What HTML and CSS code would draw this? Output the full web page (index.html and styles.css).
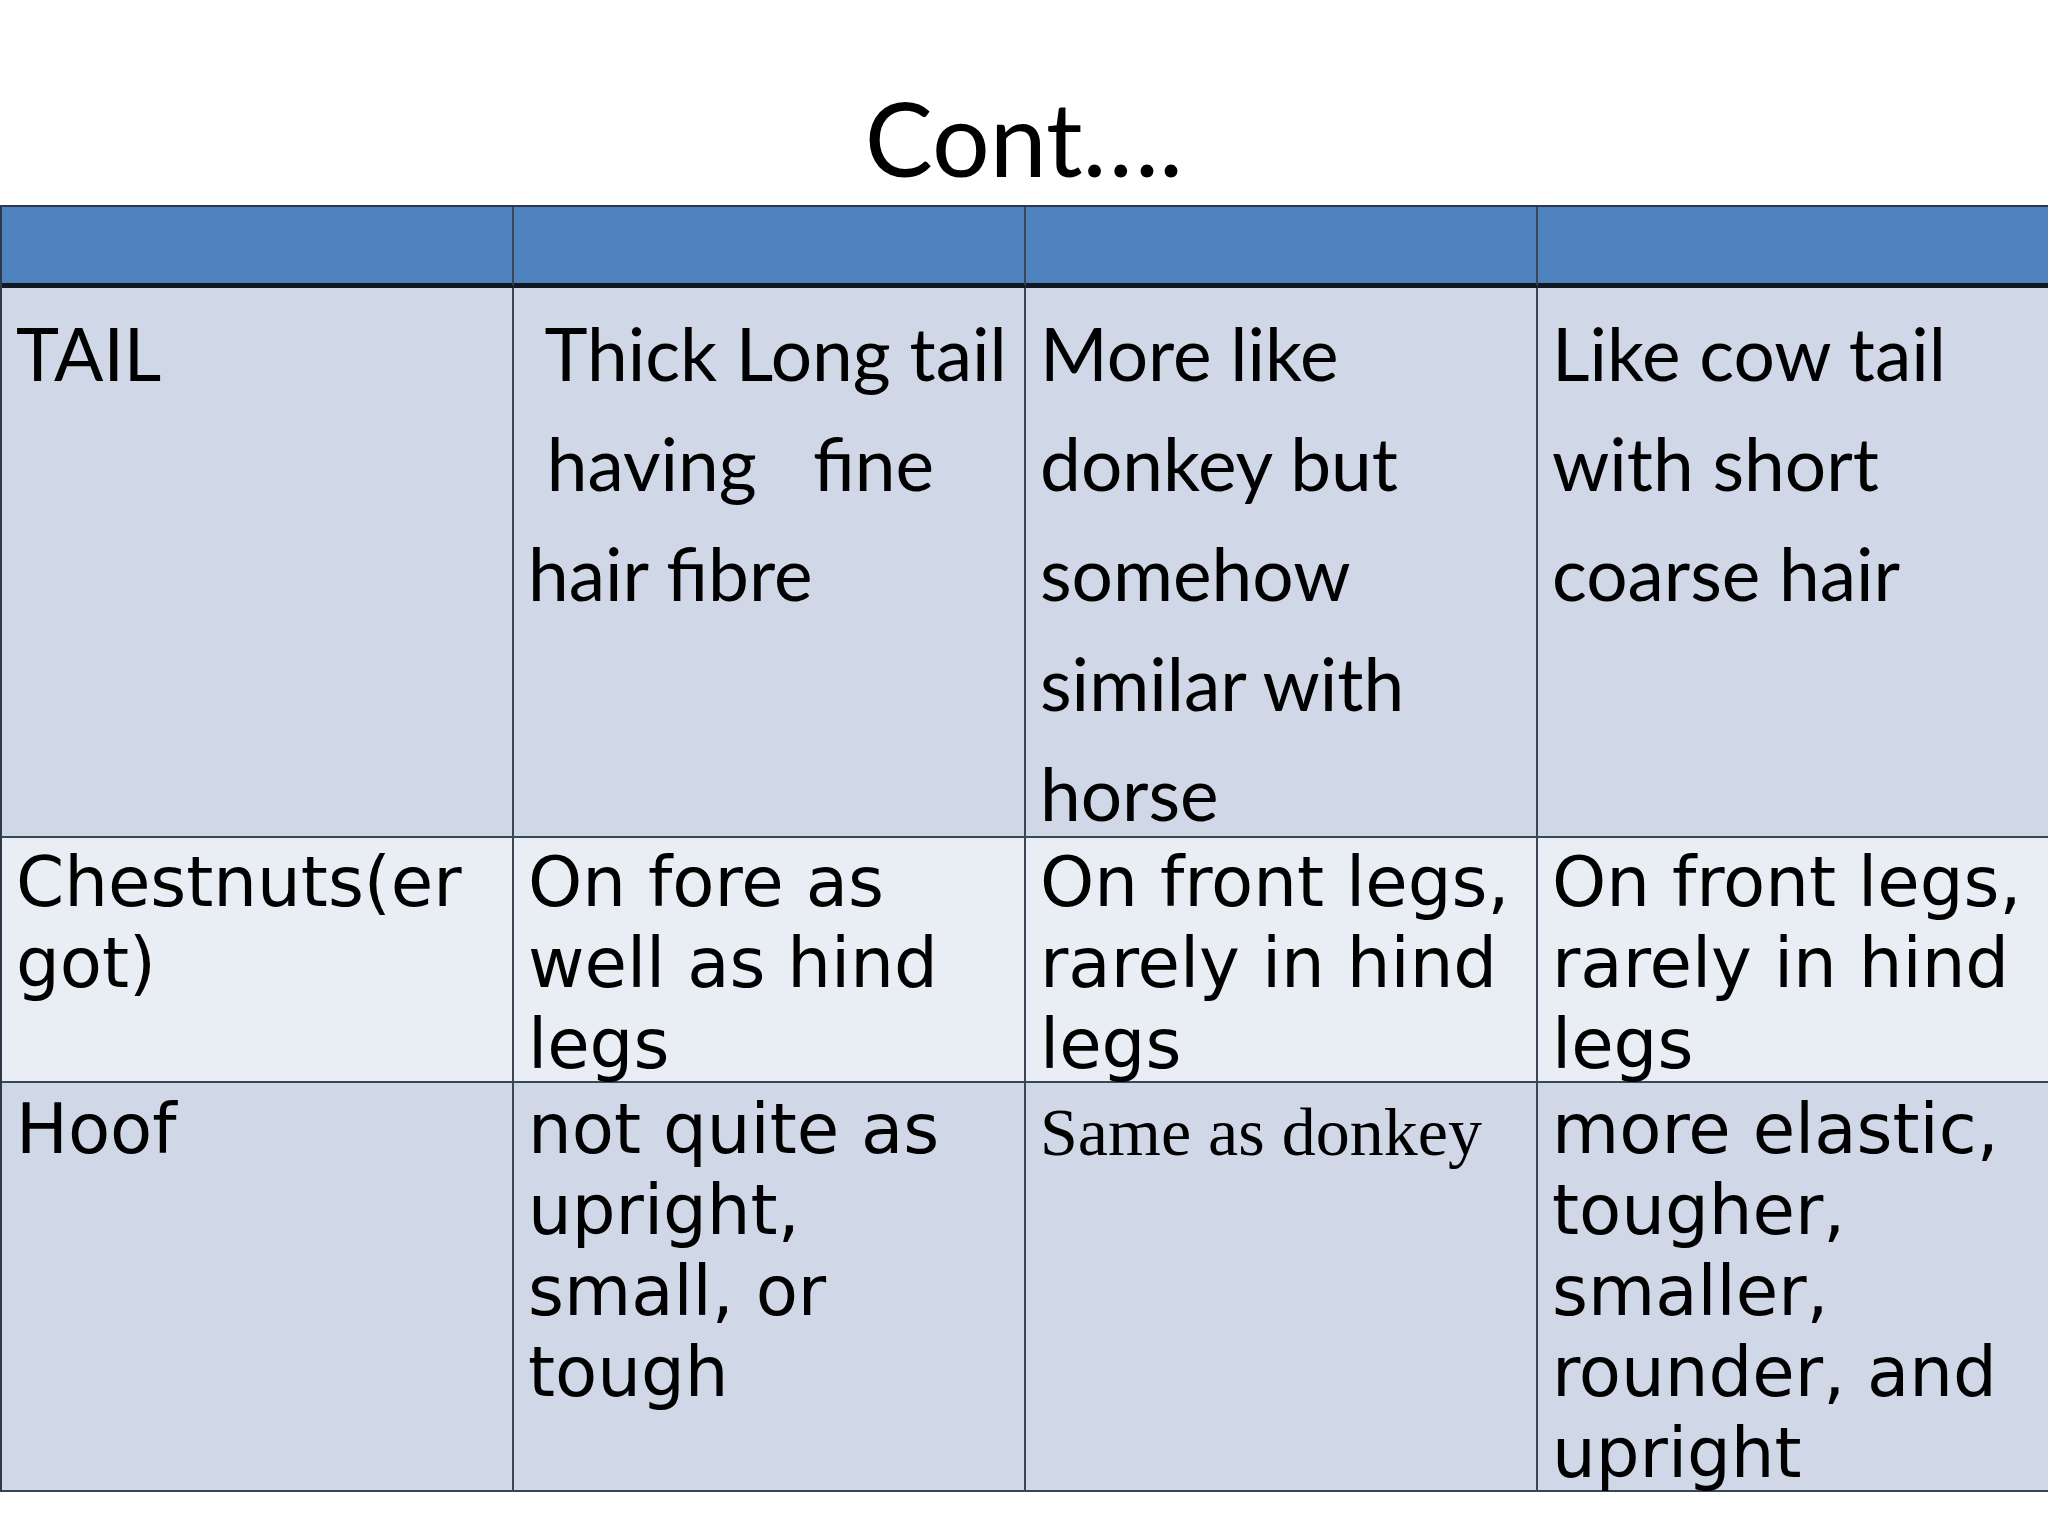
FILE: index.html
```html
<!DOCTYPE html>
<html lang="en">
<head>
<meta charset="utf-8">
<title>Cont....</title>
<link rel="stylesheet" href="styles.css">
</head>
<body>
<div class="slide">
  <h1 class="title">Cont….</h1>
  <div class="table">
    <div class="cell head"></div>
    <div class="cell head"></div>
    <div class="cell head"></div>
    <div class="cell head"></div>

    <div class="cell r1 sans">TAIL</div>
    <div class="cell r1 sans"><span class="pre"> Thick Long tail
 having   fine
hair fibre</span></div>
    <div class="cell r1 sans">More like<br>donkey but<br>somehow<br>similar with<br>horse</div>
    <div class="cell r1 sans">Like cow tail<br>with short<br>coarse hair</div>

    <div class="cell r2 dv">Chestnuts(er<br>got)</div>
    <div class="cell r2 dv">On fore as<br>well as hind<br>legs</div>
    <div class="cell r2 dv">On front legs,<br>rarely in hind<br>legs</div>
    <div class="cell r2 dv">On front legs,<br>rarely in hind<br>legs</div>

    <div class="cell r3 dv">Hoof</div>
    <div class="cell r3 dv">not quite as<br>upright,<br>small, or<br>tough</div>
    <div class="cell r3 serif">Same as donkey</div>
    <div class="cell r3 dv">more elastic,<br>tougher,<br>smaller,<br>rounder, and<br>upright</div>
  </div>
</div>
</body>
</html>
```

FILE: styles.css
```css
html, body {
  margin: 0;
  padding: 0;
  background: #ffffff;
}

.slide {
  width: 2048px;
  height: 1536px;
  overflow: hidden;
  background: #ffffff;
  color: #000000;
}

.title {
  margin: 0;
  box-sizing: border-box;
  height: 205px;
  padding-top: 77px;
  font-family: Lato, "Open Sans", sans-serif;
  font-weight: 400;
  font-size: 102px;
  line-height: 1.2;
  text-align: center;
}

.table {
  display: grid;
  grid-template-columns: 512px 512px 512px 512px;
  grid-template-rows: 81px 550px 245px 409px;
  border-top: 2px solid #2e3a48;
  border-left: 2px solid #2e3a48;
  width: 2048px;
  box-sizing: border-box;
}

.cell {
  box-sizing: border-box;
  border-right: 2px solid #3a4656;
  border-bottom: 2px solid #3a4656;
  padding-left: 14px;
  padding-right: 6px;
  overflow: visible;
  white-space: nowrap;
}

.head {
  background: #4f81bd;
  border-bottom: 5px solid #111a24;
}

.r1 {
  background: #d0d8e8;
}

.r2 {
  background: #e9edf4;
}

.r3 {
  background: #d0d8e8;
}

.sans {
  font-family: Lato, "Open Sans", sans-serif;
  font-size: 73px;
  line-height: 110px;
  padding-top: 10px;
}

.pre {
  white-space: pre;
}

.dv {
  font-family: "DejaVu Sans", Verdana, sans-serif;
  font-size: 69px;
  line-height: 81px;
  padding-top: 4px;
}

.r3.dv {
  padding-top: 6px;
}

.serif {
  font-family: "Liberation Serif", "Times New Roman", serif;
  font-size: 68px;
  line-height: 81px;
  padding-top: 9px;
}
```
